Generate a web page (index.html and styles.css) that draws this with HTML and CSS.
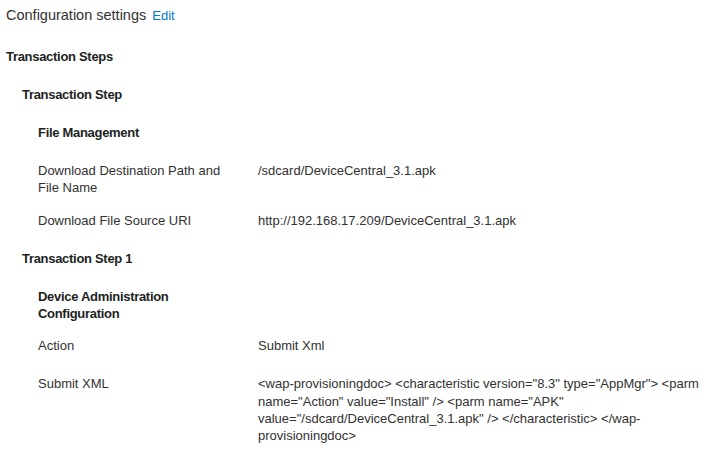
FILE: index.html
```html
<!DOCTYPE html>
<html lang="en">
<head>
<meta charset="utf-8">
<title>Configuration settings</title>
<link rel="stylesheet" href="styles.css">
</head>
<body>
<div class="page">
  <div class="title">
    <span class="title-text">Configuration settings</span>
    <a class="edit" href="#">Edit</a>
  </div>
  <div class="item level0"><div class="heading">Transaction Steps</div></div>
  <div class="item level1"><div class="heading">Transaction Step</div></div>
  <div class="item level2"><div class="heading label">File Management</div></div>
  <div class="item level2 row">
    <div class="label">Download Destination Path and File Name</div>
    <div class="value">/sdcard/DeviceCentral_3.1.apk</div>
  </div>
  <div class="item level2 row">
    <div class="label">Download File Source URI</div>
    <div class="value">http://192.168.17.209/DeviceCentral_3.1.apk</div>
  </div>
  <div class="item level1"><div class="heading">Transaction Step 1</div></div>
  <div class="item level2"><div class="heading label">Device Administration Configuration</div></div>
  <div class="item level2 row">
    <div class="label">Action</div>
    <div class="value">Submit Xml</div>
  </div>
  <div class="item level2 row">
    <div class="label">Submit XML</div>
    <div class="value">&lt;wap-provisioningdoc&gt; &lt;characteristic version="8.3" type="AppMgr"&gt; &lt;parm name="Action" value="Install" /&gt; &lt;parm name="APK" value="/sdcard/DeviceCentral_3.1.apk" /&gt; &lt;/characteristic&gt; &lt;/wap-provisioningdoc&gt;</div>
  </div>
</div>
</body>
</html>
```

FILE: styles.css
```css
html, body {
  margin: 0;
  padding: 0;
  background: #ffffff;
}

body {
  font-family: "Liberation Sans", Arial, sans-serif;
  font-size: 13px;
  color: #323130;
}

.page {
  padding: 6px 4px 0 6px;
}

.title {
  font-size: 14.5px;
  line-height: 19px;
  margin-bottom: 23px;
  display: flex;
  gap: 6px;
  align-items: baseline;
}

.edit {
  color: #0078d4;
  text-decoration: none;
  font-size: 13px;
}

.item {
  display: flex;
  box-sizing: border-box;
  min-height: 38px;
  padding-bottom: 15px;
  line-height: 17.33px;
}

.level1 {
  padding-left: 16px;
}

.level2 {
  padding-left: 32px;
}

.heading {
  font-weight: 700;
  color: #201f1e;
  letter-spacing: -0.3px;
}

.label {
  width: 200px;
  flex: none;
  margin-right: 20px;
}

.value {
  flex: 1;
  min-width: 0;
}
```
